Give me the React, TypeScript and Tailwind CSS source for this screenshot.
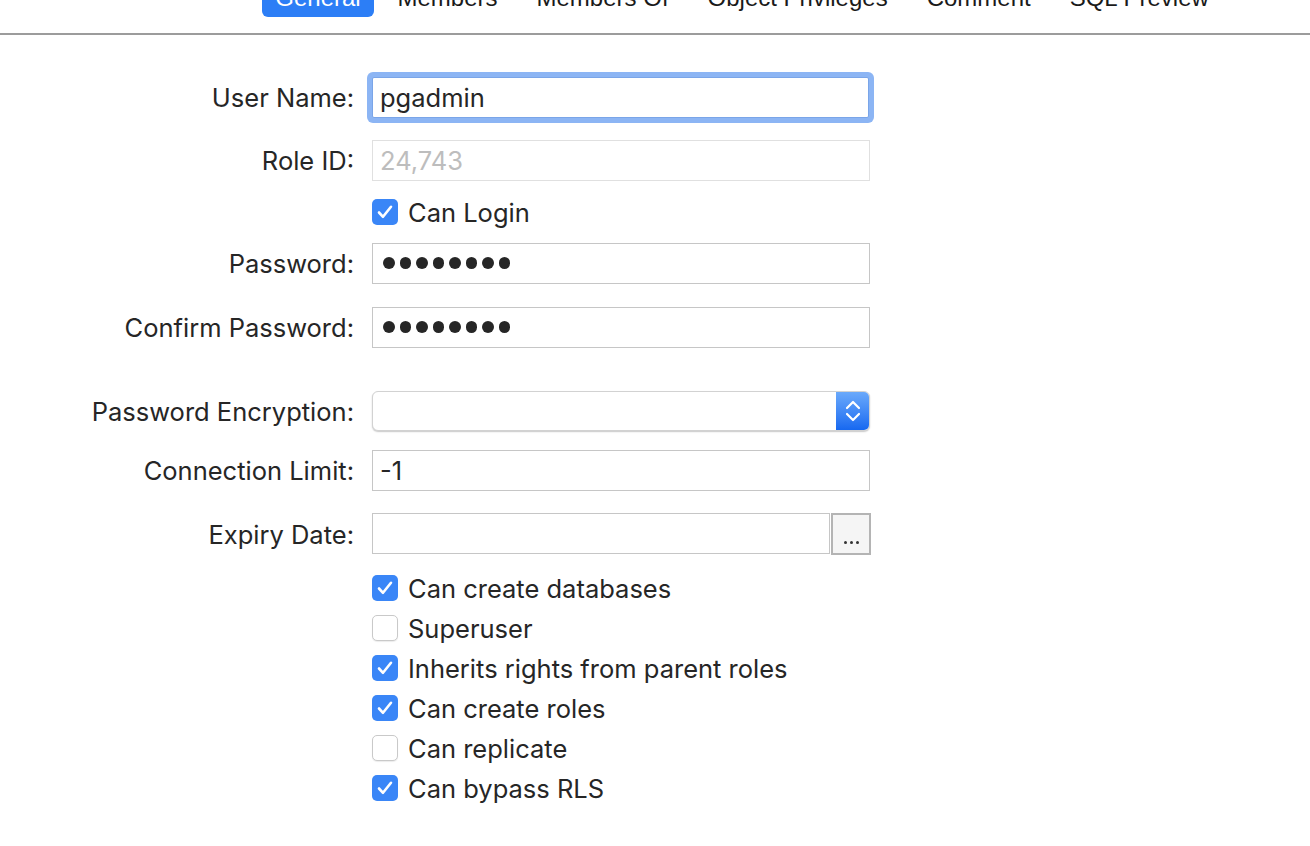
import React from 'react'

const tabs = ['Members', 'Members Of', 'Object Privileges', 'Comment', 'SQL Preview']

function Check({ checked }: { checked: boolean }) {
  if (!checked) {
    return (
      <div className="w-[26px] h-[26px] rounded-[5px] border-[1.5px] border-[#c9c9c9] bg-white shadow-[0_1px_1px_rgba(0,0,0,0.08)]" />
    )
  }
  return (
    <div className="w-[26px] h-[26px] rounded-[5px] bg-[#3a86f7] flex items-center justify-center">
      <svg width="20" height="20" viewBox="0 0 20 20" fill="none">
        <path d="M4 10.5 L8 14.8 L16 4.8" stroke="white" strokeWidth="2.6" strokeLinecap="round" strokeLinejoin="round" />
      </svg>
    </div>
  )
}

function Row({ label, children, className = '' }: { label?: string; children: React.ReactNode; className?: string }) {
  return (
    <div className={`flex items-center ${className}`}>
      <div className="w-[354px] text-right whitespace-nowrap pt-[2px]">{label}</div>
      <div className="ml-[18px] flex items-center">{children}</div>
    </div>
  )
}

function Dots() {
  return (
    <div className="flex items-center gap-[5px] pl-[10px]">
      {Array.from({ length: 8 }).map((_, i) => (
        <span key={i} className="w-[11.5px] h-[11.5px] rounded-full bg-[#262626]" />
      ))}
    </div>
  )
}

function CheckRow({ label, checked, className = '' }: { label: string; checked: boolean; className?: string }) {
  return (
    <div className={`flex items-center h-[26px] pl-[372px] ${className}`}>
      <Check checked={checked} />
      <span className="ml-[10px] whitespace-nowrap pt-[2px]">{label}</span>
    </div>
  )
}

export default function App() {
  return (
    <div className="w-[1310px] h-[846px] bg-white overflow-hidden text-[25.5px] leading-none text-[#262626] font-['Inter','Liberation_Sans',sans-serif]">
      {/* Tabs */}
      <div className="h-[33px] overflow-hidden font-['Liberation_Sans','Arial',sans-serif] text-[24px] text-[#1a1a1a]">
        <div className="flex items-center -mt-[22px] h-[40px]">
          <div className="ml-[262px] w-[112px] h-[39px] -mt-[1px] rounded-[6px] bg-[#2c7ef6] text-white flex items-center justify-center">
            General
          </div>
          <div className="flex items-center ml-[4px]">
            {tabs.map(t => (
              <div key={t} className="px-[19.5px] whitespace-nowrap">{t}</div>
            ))}
          </div>
        </div>
      </div>
      <div className="h-[1.5px] bg-[#9c9c9c]" />

      {/* Form */}
      <div className="flex flex-col">
        <Row label="User Name:" className="mt-[42px]">
          <div className="w-[497px] h-[41px] rounded-[2px] border border-[#7aa5e8] bg-white ring-[5px] ring-[#8cb5f4] flex items-center pl-[7px] pt-[2px]">
            pgadmin
          </div>
        </Row>
        <Row label="Role ID:" className="mt-[22px]">
          <div className="w-[498px] h-[41px] border-[1.5px] border-[#e0e0e0] bg-white flex items-center pl-[7px] pt-[2px] text-[#bdbdbd]">
            24,743
          </div>
        </Row>
        <CheckRow label="Can Login" checked className="mt-[18px]" />
        <Row label="Password:" className="mt-[18px]">
          <div className="w-[498px] h-[41px] border-[1.5px] border-[#c6c6c6] bg-white flex items-center">
            <Dots />
          </div>
        </Row>
        <Row label="Confirm Password:" className="mt-[23px]">
          <div className="w-[498px] h-[41px] border-[1.5px] border-[#c6c6c6] bg-white flex items-center">
            <Dots />
          </div>
        </Row>
        <Row label="Password Encryption:" className="mt-[43px]">
          <div className="w-[498px] h-[40px] rounded-[6px] border border-[#d2d2d2] bg-white shadow-[0_1px_1.5px_rgba(0,0,0,0.22)] flex justify-end overflow-hidden">
            <div className="w-[33px] h-full bg-gradient-to-b from-[#6aa9fb] to-[#1668f0] flex items-center justify-center">
              <svg width="18" height="32" viewBox="0 0 18 32" fill="none">
                <path d="M3 13 L9 7 L15 13" stroke="white" strokeWidth="2.2" strokeLinecap="round" strokeLinejoin="round" />
                <path d="M3 19 L9 25 L15 19" stroke="white" strokeWidth="2.2" strokeLinecap="round" strokeLinejoin="round" />
              </svg>
            </div>
          </div>
        </Row>
        <Row label="Connection Limit:" className="mt-[19px]">
          <div className="w-[498px] h-[41px] border-[1.5px] border-[#c6c6c6] bg-white flex items-center pl-[7px] pt-[2px]">
            -1
          </div>
        </Row>
        <Row label="Expiry Date:" className="mt-[22px]">
          <div className="w-[458px] h-[41px] border-[1.5px] border-[#c6c6c6] bg-white" />
          <div className="ml-[1px] w-[40px] h-[42px] border-[2.5px] border-[#b4b4b4] bg-[#f5f5f5] flex items-end justify-center pb-[9px]">
            <div className="flex gap-[3px]">
              <span className="w-[3px] h-[3px] rounded-full bg-[#333]" />
              <span className="w-[3px] h-[3px] rounded-full bg-[#333]" />
              <span className="w-[3px] h-[3px] rounded-full bg-[#333]" />
            </div>
          </div>
        </Row>
        <CheckRow label="Can create databases" checked className="mt-[20px]" />
        <CheckRow label="Superuser" checked={false} className="mt-[14px]" />
        <CheckRow label="Inherits rights from parent roles" checked className="mt-[14px]" />
        <CheckRow label="Can create roles" checked className="mt-[14px]" />
        <CheckRow label="Can replicate" checked={false} className="mt-[14px]" />
        <CheckRow label="Can bypass RLS" checked className="mt-[14px]" />
      </div>
    </div>
  )
}
